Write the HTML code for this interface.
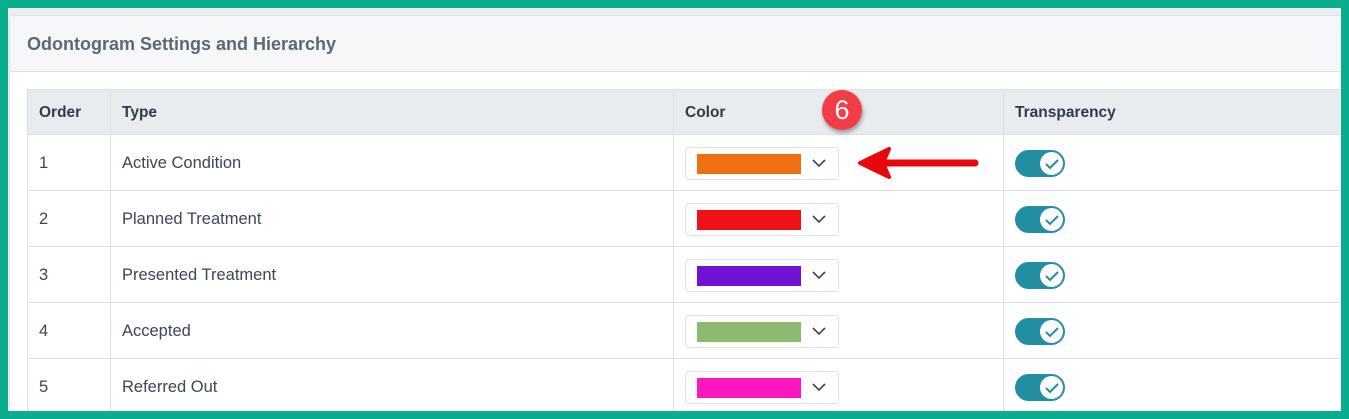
<!DOCTYPE html>
<html><head><style>
*{box-sizing:border-box;margin:0;padding:0}
body{width:1349px;height:419px;background:#0aae8e;font-family:"Liberation Sans",sans-serif;overflow:hidden;position:relative}
.inner{position:absolute;left:8px;top:8px;width:1333px;height:403px;background:#eceef1;overflow:hidden}
.card{position:absolute;left:1px;top:7px;width:1340px;height:400px;background:#fff;border:1px solid #dde1e6;border-radius:5px 0 0 0}
.hdr{height:56px;background:#f6f7f9;border-bottom:1px solid #dde1e6;padding-left:17px;line-height:56px;font-weight:bold;font-size:18px;color:#5b6877}
table{position:absolute;left:17px;top:73px;border-collapse:collapse;width:1400px;font-size:16.5px;color:#3b4656}
th,td{border:1px solid #dde1e6;text-align:left;padding-left:11px}
th{background:#e9ecef;height:45px;font-weight:bold;color:#2f3a4a;font-size:15.5px;padding-top:2px}
td{height:56px;padding-top:2px}
.sel{width:154px;height:33px;border:1px solid #dde1e6;border-radius:4px;position:relative}
.sw{position:absolute;left:11px;top:6px;width:104px;height:20px}
.chev{position:absolute;left:126px;top:10px}
.tg{width:50px;height:27px;border-radius:14px;background:#228fa0;position:relative}
.tg i{position:absolute;right:2px;top:2px;width:23px;height:23px;border-radius:50%;background:#fff}
.badge{position:absolute;left:822px;top:90px;width:40px;height:40px;border-radius:50%;background:#f23c46;color:#fff;font-size:27px;text-align:center;line-height:40px;box-shadow:1px 3px 4px rgba(0,0,0,.35)}
</style></head><body>
<div class="inner"><div class="card"><div class="hdr">Odontogram Settings and Hierarchy</div>
<table>
<tr><th style="width:83px">Order</th><th style="width:563px">Type</th><th style="width:330px">Color</th><th>Transparency</th></tr>
<tr><td>1</td><td>Active Condition</td><td><div class="sel"><div class="sw" style="background:#ee7012"></div><svg class="chev" width="14" height="10"><path d="M1 2l6 6 6-6" stroke="#36475a" stroke-width="1.6" fill="none"/></svg></div></td><td><div class="tg"><i><svg width="23" height="23"><path d="M6 12l4 4 8-8" stroke="#228fa0" stroke-width="2" fill="none"/></svg></i></div></td></tr>
<tr><td>2</td><td>Planned Treatment</td><td><div class="sel"><div class="sw" style="background:#ee1115"></div><svg class="chev" width="14" height="10"><path d="M1 2l6 6 6-6" stroke="#36475a" stroke-width="1.6" fill="none"/></svg></div></td><td><div class="tg"><i><svg width="23" height="23"><path d="M6 12l4 4 8-8" stroke="#228fa0" stroke-width="2" fill="none"/></svg></i></div></td></tr>
<tr><td>3</td><td>Presented Treatment</td><td><div class="sel"><div class="sw" style="background:#6f12d4"></div><svg class="chev" width="14" height="10"><path d="M1 2l6 6 6-6" stroke="#36475a" stroke-width="1.6" fill="none"/></svg></div></td><td><div class="tg"><i><svg width="23" height="23"><path d="M6 12l4 4 8-8" stroke="#228fa0" stroke-width="2" fill="none"/></svg></i></div></td></tr>
<tr><td>4</td><td>Accepted</td><td><div class="sel"><div class="sw" style="background:#8cba6f"></div><svg class="chev" width="14" height="10"><path d="M1 2l6 6 6-6" stroke="#36475a" stroke-width="1.6" fill="none"/></svg></div></td><td><div class="tg"><i><svg width="23" height="23"><path d="M6 12l4 4 8-8" stroke="#228fa0" stroke-width="2" fill="none"/></svg></i></div></td></tr>
<tr><td>5</td><td>Referred Out</td><td><div class="sel"><div class="sw" style="background:#fb16c0"></div><svg class="chev" width="14" height="10"><path d="M1 2l6 6 6-6" stroke="#36475a" stroke-width="1.6" fill="none"/></svg></div></td><td><div class="tg"><i><svg width="23" height="23"><path d="M6 12l4 4 8-8" stroke="#228fa0" stroke-width="2" fill="none"/></svg></i></div></td></tr>
</table></div></div>
<div class="badge">6</div>
<svg style="position:absolute;left:855px;top:145px" width="130" height="36"><path d="M20 18H120" stroke="#e8070c" stroke-width="7" stroke-linecap="round"/><path d="M5 18L34 4L28 18L34 32Z" fill="#e8070c" stroke="#e8070c" stroke-width="4" stroke-linejoin="round"/></svg>
</body></html>
